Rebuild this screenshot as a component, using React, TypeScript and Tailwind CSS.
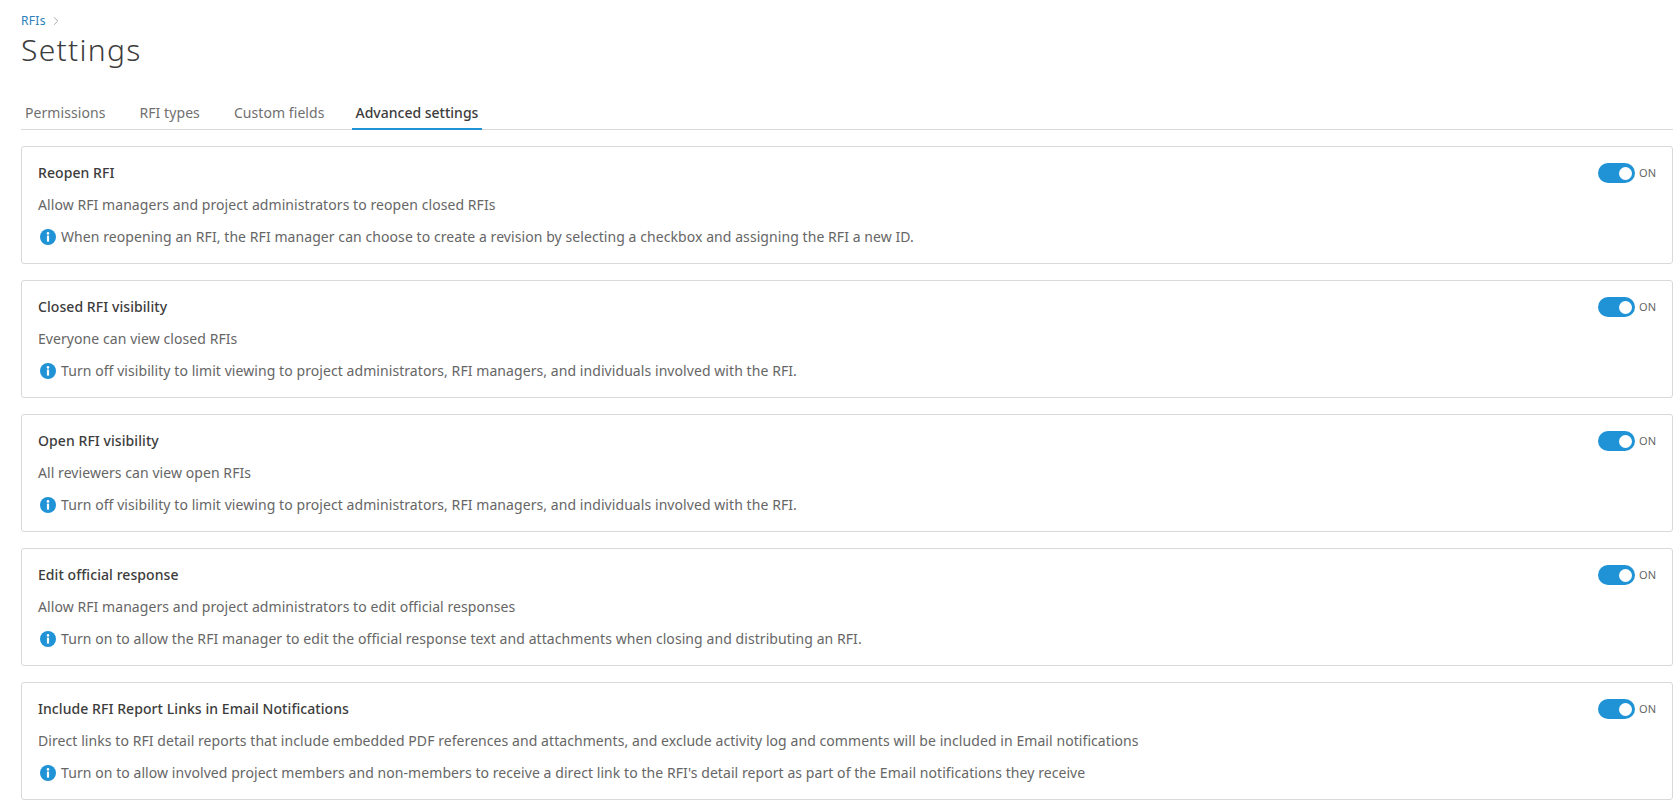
import React from "react";
import { ChevronRight } from "lucide-react";

const cards = [
  {
    title: "Reopen RFI",
    text: "Allow RFI managers and project administrators to reopen closed RFIs",
    note: "When reopening an RFI, the RFI manager can choose to create a revision by selecting a checkbox and assigning the RFI a new ID.",
  },
  {
    title: "Closed RFI visibility",
    text: "Everyone can view closed RFIs",
    note: "Turn off visibility to limit viewing to project administrators, RFI managers, and individuals involved with the RFI.",
  },
  {
    title: "Open RFI visibility",
    text: "All reviewers can view open RFIs",
    note: "Turn off visibility to limit viewing to project administrators, RFI managers, and individuals involved with the RFI.",
  },
  {
    title: "Edit official response",
    text: "Allow RFI managers and project administrators to edit official responses",
    note: "Turn on to allow the RFI manager to edit the official response text and attachments when closing and distributing an RFI.",
  },
  {
    title: "Include RFI Report Links in Email Notifications",
    text: "Direct links to RFI detail reports that include embedded PDF references and attachments, and exclude activity log and comments will be included in Email notifications",
    note: "Turn on to allow involved project members and non-members to receive a direct link to the RFI's detail report as part of the Email notifications they receive",
  },
];

const tabs = [
  { label: "Permissions", gap: "mr-[26px]" },
  { label: "RFI types", gap: "mr-[26px]" },
  { label: "Custom fields", gap: "mr-[23px]" },
];

const InfoIcon = () => (
  <svg width="16" height="16" viewBox="0 0 16 16" className="ml-[2px] shrink-0">
    <circle cx="8" cy="8" r="8" fill="#1f93d6" />
    <circle cx="8" cy="4.4" r="1.3" fill="#fff" />
    <rect x="6.9" y="6.6" width="2.2" height="6" fill="#fff" />
  </svg>
);

const App = () => {
  return (
    <div className="min-h-[805px] bg-white pt-[14px] pr-[7px] pl-[21px] font-['Noto_Sans',sans-serif] text-[14px] tracking-[0.07px] text-[#666]">
      <div className="flex h-[14px] items-center gap-[3px] text-[12px] leading-[14px] tracking-[0.3px] text-[#2b80b9]">
        <span>RFIs</span>
        <ChevronRight size={14} strokeWidth={1} className="text-[#707070]" />
      </div>
      <h1 className="mt-[3px] text-[30px] leading-[38px] font-light tracking-[1.3px] text-[#3c3c3c]">
        Settings
      </h1>

      <div className="mt-[22px] flex h-[39px] border-b border-[#d9d9d9]">
        {tabs.map((tab) => (
          <div
            key={tab.label}
            className={`-mb-px flex items-center border-b-2 border-transparent px-[4px] pt-[5px] text-[#707070] ${tab.gap}`}
          >
            {tab.label}
          </div>
        ))}
        <div className="-mb-px flex items-center border-b-2 border-[#1f93d6] px-[4px] pt-[5px] font-medium tracking-normal text-[#3c3c3c]">
          Advanced settings
        </div>
      </div>

      <div className="mt-[16px] flex flex-col gap-[16px]">
        {cards.map((card) => (
          <div
            key={card.title}
            className="relative h-[118px] rounded-[3px] border border-[#d9d9d9] px-[16px] pt-[16px]"
          >
            <div className="h-[20px] leading-[20px] font-medium text-[#3c3c3c]">
              {card.title}
            </div>
            <div className="mt-[12px] h-[20px] leading-[20px]">{card.text}</div>
            <div className="mt-[12px] flex h-[20px] items-center gap-[5px] leading-[20px]">
              <InfoIcon />
              <span>{card.note}</span>
            </div>
            <div className="absolute top-[16px] right-[16px] flex items-center gap-[4px]">
              <div className="flex h-[20px] w-[37px] items-center justify-end rounded-full bg-[#1f93d6] pr-[3px]">
                <div className="h-[13px] w-[13px] rounded-full bg-white" />
              </div>
              <span className="text-[11px] tracking-normal text-[#666]">ON</span>
            </div>
          </div>
        ))}
      </div>
    </div>
  );
};

export default App;
